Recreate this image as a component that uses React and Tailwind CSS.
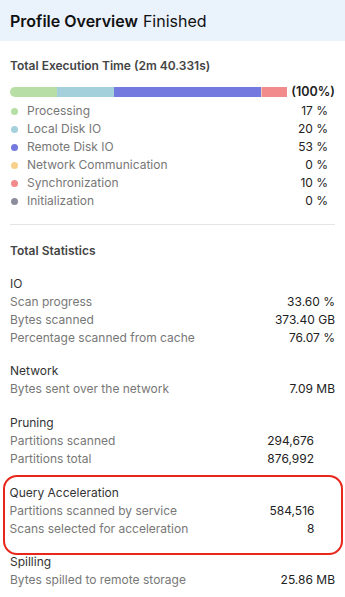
import React from 'react';

const legend = [
  { label: 'Processing', value: '17 %', color: 'bg-[#b5dfa3]' },
  { label: 'Local Disk IO', value: '20 %', color: 'bg-[#a4d1dc]' },
  { label: 'Remote Disk IO', value: '53 %', color: 'bg-[#7479e0]' },
  { label: 'Network Communication', value: '0 %', color: 'bg-[#f9d08c]' },
  { label: 'Synchronization', value: '10 %', color: 'bg-[#f28b8b]' },
  { label: 'Initialization', value: '0 %', color: 'bg-[#8c8e9e]' },
];

function Row({ label, value, inset }) {
  return (
    <div className="flex items-center justify-between h-[18px]">
      <span className="text-[#777]">{label}</span>
      <span className={`text-[#222] ${inset ? 'pr-[21px]' : ''}`}>{value}</span>
    </div>
  );
}

function Group({ title, rows, inset }) {
  return (
    <div>
      <div className="h-[18px] flex items-center text-[#333]">{title}</div>
      {rows.map((r) => (
        <Row key={r[0]} label={r[0]} value={r[1]} inset={inset} />
      ))}
    </div>
  );
}

export default function App() {
  return (
    <div className="w-[345px] h-[597px] bg-white overflow-hidden font-['Inter',sans-serif] text-[12px]">
      {/* header */}
      <div className="h-[41px] bg-[#eaf2fc] flex items-center px-[10px] text-[16px] text-[#111]">
        <span className="font-semibold">Profile Overview</span>
        <span className="ml-[5px]">Finished</span>
      </div>

      <div className="px-[10px]">
        <div className="mt-[16px] text-[12px] font-semibold text-[#444]">Total Execution Time (2m 40.331s)</div>

        <div className="mt-[10px] flex items-center h-[14px]">
          <div className="flex w-[280px] h-[10px] rounded-l-full overflow-hidden">
            <div className="w-[47px] bg-[#b7dfa5]" />
            <div className="w-[57px] bg-[#a3d0db]" />
            <div className="w-[147px] bg-[#7479e0]" />
            <div className="w-[1px] bg-[#f5c5b0]" />
            <div className="flex-1 bg-[#f28b8b]" />
          </div>
          <span className="ml-[4px] text-[12.5px] font-semibold text-[#222]">(100%)</span>
        </div>

        <div className="mt-[3px]">
          {legend.map((l) => (
            <div key={l.label} className="flex items-center h-[18px]">
              <span className={`w-[7px] h-[7px] rounded-full ${l.color} ml-[1px]`} />
              <span className="ml-[9px] text-[#777]">{l.label}</span>
              <span className="ml-auto mr-[7px] text-[#222]">{l.value}</span>
            </div>
          ))}
        </div>

        <div className="mt-[14px] border-t border-[#e5e5e5]" />

        <div className="mt-[17px] text-[12px] font-semibold text-[#444]">Total Statistics</div>

        <div className="mt-[15px] flex flex-col gap-[16px]">
          <Group
            title="IO"
            rows={[
              ['Scan progress', '33.60 %'],
              ['Bytes scanned', '373.40 GB'],
              ['Percentage scanned from cache', '76.07 %'],
            ]}
          />
          <div className="-mt-[1px]">
            <Group title="Network" rows={[['Bytes sent over the network', '7.09 MB']]} />
          </div>
          <Group
            title="Pruning"
            inset
            rows={[
              ['Partitions scanned', '294,676'],
              ['Partitions total', '876,992'],
            ]}
          />
          <div className="-ml-[7px] -mr-[8px] -mt-[9px] -mb-[18px] pl-[4.5px] pr-[5.5px] pt-[6.5px] pb-[15.5px] border-[2.5px] border-[#e8261a] rounded-[14px]">
            <Group
              title="Query Acceleration"
              inset
              rows={[
                ['Partitions scanned by service', '584,516'],
                ['Scans selected for acceleration', '8'],
              ]}
            />
          </div>
          <Group title="Spilling" rows={[['Bytes spilled to remote storage', '25.86 MB']]} />
        </div>
      </div>
    </div>
  );
}
